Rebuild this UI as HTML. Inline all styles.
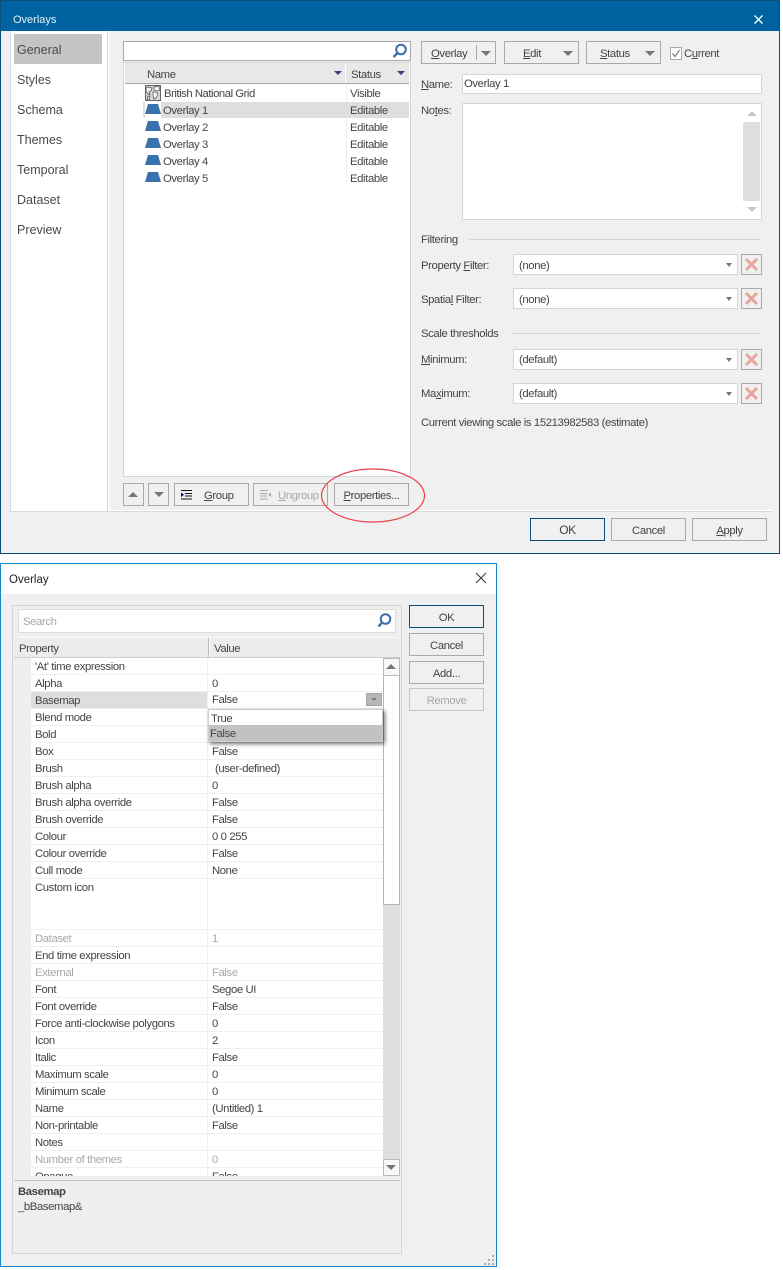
<!DOCTYPE html>
<html><head><meta charset="utf-8"><style>
html,body{margin:0;padding:0;background:#fff}
body{width:783px;height:1270px;position:relative;overflow:hidden;font-family:"Liberation Sans",sans-serif;font-size:11.3px;letter-spacing:-.38px;color:#444}
div,span,svg{position:absolute;box-sizing:border-box}
.t{white-space:nowrap;line-height:16px;height:16px;margin-top:1px}
.nav{font-size:12.5px;letter-spacing:0;color:#4a4a4a;left:17px}
.b{background:#f0f0f0;border:1px solid #a9a9a9;height:23px;width:75px;text-align:center;line-height:24px;white-space:nowrap}
.w{background:#fff;border:1px solid #d5d5d5}
.c{background:#fff;border:1px solid #d5d5d5;left:513px;width:225px;height:21px;line-height:21px;padding-left:5px}
.c i{position:absolute;right:5px;top:8px;width:0;height:0;border:3px solid transparent;border-top:4px solid #777;border-bottom:0}
.x{left:741px;width:21px;height:21px;background:#f0f0f0;border:1px solid #a9a9a9}
.a{position:absolute;width:0;height:0;border-left:5px solid transparent;border-right:5px solid transparent}
.dn{border-top:5px solid #777}.up{border-bottom:5px solid #777}
.r{position:relative;height:17px;border-bottom:1px solid #f0f0f0;line-height:16px;white-space:nowrap}
.r span{top:0}.r span:first-child{left:4px}.r span+span{left:181px}
.g{color:#a8a8a8}
.ln{height:1px;background:#d5d5d5}
</style></head><body>

<!-- top dialog -->
<div style="left:0;top:0;width:780px;height:554px;background:#f0f0f0;border:1px solid #0a4f78"></div>
<div style="left:0;top:0;width:780px;height:31px;background:#0063a1;border:1px solid #0a4f78;border-bottom:0"></div>
<div class="t" style="left:13px;top:11px;color:#e8f0f6;font-size:11px;letter-spacing:0">Overlays</div>
<svg style="left:753px;top:14px" width="11" height="11"><path d="M1.5 1.5L9.5 9.5M9.5 1.5L1.5 9.5" stroke="#fff" stroke-width="1.4"/></svg>

<div style="left:10px;top:31px;width:98px;height:481px;background:#fff;border:1px solid #dadada;border-top:0"></div>
<div style="left:108px;top:31px;width:664px;height:481px;background:#f0f0f0;border:2px solid #fff;border-top:0;border-right:0;outline:0"></div>
<div class="ln" style="left:108px;top:511px;width:664px;background:#dadada"></div>
<div style="left:14px;top:34px;width:88px;height:30px;background:#c4c4c4"></div>
<div class="t nav" style="top:41px">General</div>
<div class="t nav" style="top:71px">Styles</div>
<div class="t nav" style="top:101px">Schema</div>
<div class="t nav" style="top:131px">Themes</div>
<div class="t nav" style="top:161px">Temporal</div>
<div class="t nav" style="top:191px">Dataset</div>
<div class="t nav" style="top:221px">Preview</div>

<div style="left:123px;top:41px;width:288px;height:20px;background:#fff;border:1px solid #a9a9a9"></div>
<svg style="left:391px;top:43px" width="17" height="16" viewBox="0 0 17 16"><circle cx="10" cy="6.5" r="4.8" fill="none" stroke="#3a72ad" stroke-width="2"/><path d="M6.5 10L2.5 14" stroke="#3a72ad" stroke-width="2.4"/></svg>

<div style="left:123px;top:62px;width:288px;height:415px;background:#fff;border:1px solid #d5d5d5"></div>
<div style="left:125px;top:63px;width:284px;height:21px;background:#e8e8e8;border-bottom:1px solid #aaa"></div>
<div style="left:345px;top:63px;width:1px;height:20px;background:#fff"></div>
<div class="t" style="left:147px;top:66px">Name</div>
<div class="t" style="left:351px;top:66px">Status</div>
<div style="left:334px;top:71px;width:0;height:0;border:4px solid transparent;border-top:4px solid #3c3c78;border-bottom:0"></div>
<div style="left:397px;top:71px;width:0;height:0;border:4px solid transparent;border-top:4px solid #3c3c78;border-bottom:0"></div>
<div style="left:346px;top:84px;width:1px;height:102px;background:#eee"></div>
<div style="left:143px;top:102px;width:2px;height:16px;background:#dedede"></div>
<div style="left:161px;top:102px;width:248px;height:16px;background:#dedede"></div>
<svg style="left:145px;top:85px" width="16" height="16" viewBox="0 0 16 16"><rect x=".5" y=".5" width="15" height="15" fill="#d8d8d8" stroke="#666"/><path d="M1 3L4 2L7 3L6 6L4 7L5 10L3 9L1 6ZM9 2L14 1.5L15 5L12 6L9 5ZM8 7L11 7L13 9L11 13L9 14L8 10ZM3 11L5 12L4 15L2 14Z" fill="#f8f8f8" stroke="#555" stroke-width=".8"/></svg>
<svg style="left:145px;top:0" width="16" height="190"><g fill="#3a72ad"><path d="M0 114L3 104H13L16 114Z"/><path d="M0 131L3 121H13L16 131Z"/><path d="M0 148L3 138H13L16 148Z"/><path d="M0 165L3 155H13L16 165Z"/><path d="M0 182L3 172H13L16 182Z"/></g></svg>
<div class="t" style="left:164px;top:85px;letter-spacing:-.46px">British National Grid</div>
<div class="t" style="left:350px;top:85px">Visible</div>
<div class="t" style="left:163px;top:102px">Overlay 1</div><div class="t" style="left:350px;top:102px">Editable</div>
<div class="t" style="left:163px;top:119px">Overlay 2</div><div class="t" style="left:350px;top:119px">Editable</div>
<div class="t" style="left:163px;top:136px">Overlay 3</div><div class="t" style="left:350px;top:136px">Editable</div>
<div class="t" style="left:163px;top:153px">Overlay 4</div><div class="t" style="left:350px;top:153px">Editable</div>
<div class="t" style="left:163px;top:170px">Overlay 5</div><div class="t" style="left:350px;top:170px">Editable</div>

<!-- list bottom buttons -->
<div class="b" style="left:123px;top:483px;width:21px"><i class="a up" style="left:4px;top:8px"></i></div>
<div class="b" style="left:148px;top:483px;width:21px"><i class="a dn" style="left:5px;top:8px"></i></div>
<div class="b" style="left:174px;top:483px"><span class="t" style="left:29px;top:3px"><u>G</u>roup</span>
<svg style="left:6px;top:6px" width="12" height="10"><path d="M0 .5H11M4 3.5H11M4 6H11M0 9H11" stroke="#111"/><path d="M0 2.5L3 4.8L0 7Z" fill="#00008b"/></svg></div>
<div class="b g" style="left:253px;top:483px"><span class="t" style="left:24px;top:3px"><u>U</u>ngroup</span>
<svg style="left:6px;top:6px" width="12" height="10"><path d="M0 .5H8M0 3.5H7M0 6H7M0 9H8" stroke="#aaa"/><path d="M11 2.5L8 4.8L11 7Z" fill="#aaa"/></svg></div>
<div class="b" style="left:334px;top:483px"><u>P</u>roperties...</div>
<svg style="left:318px;top:466px" width="110" height="60"><ellipse cx="55" cy="29.5" rx="51.5" ry="26.5" fill="none" stroke="#e8404a" stroke-width="1.2"/></svg>

<div class="b" style="left:530px;top:518px;border-color:#0a4f78"><span class="t" style="left:0;width:73px;top:2px;font-size:12px">OK</span></div>
<div class="b" style="left:611px;top:518px">Cancel</div>
<div class="b" style="left:692px;top:518px"><u>A</u>pply</div>

<!-- right pane -->
<div class="b" style="left:421px;top:41px;text-align:left;padding-left:9px"><u>O</u>verlay<i style="position:absolute;left:54px;top:3px;width:1px;height:15px;background:#aaa"></i><i class="a dn" style="left:59px;top:9px"></i></div>
<div class="b" style="left:504px;top:41px;text-align:left;padding-left:18px"><u>E</u>dit<i class="a dn" style="left:58px;top:9px"></i></div>
<div class="b" style="left:586px;top:41px;text-align:left;padding-left:13px"><u>S</u>tatus<i class="a dn" style="left:58px;top:9px"></i></div>
<svg style="left:670px;top:47px" width="13" height="13"><rect x=".5" y=".5" width="11" height="12" fill="#fff" stroke="#a9a9a9"/><path d="M2.5 6.5L5 9.5L9.5 3" fill="none" stroke="#666"/></svg>
<div class="t" style="left:684px;top:45px">C<u>u</u>rrent</div>
<div class="t" style="left:421px;top:76px"><u>N</u>ame:</div>
<div class="w" style="left:462px;top:74px;width:300px;height:20px;line-height:19px;padding-left:1px">Overlay 1</div>
<div class="t" style="left:421px;top:102px">No<u>t</u>es:</div>
<div class="w" style="left:462px;top:103px;width:300px;height:117px"></div>
<div class="a" style="left:747px;top:111px;border-bottom:5px solid #c8c8c8"></div>
<div style="left:743px;top:122px;width:17px;height:79px;background:#dedede"></div>
<div class="a" style="left:747px;top:207px;border-top:5px solid #c8c8c8"></div>

<div class="t" style="left:421px;top:231px">Filtering</div>
<div class="ln" style="left:469px;top:239px;width:291px"></div>
<div class="t" style="left:421px;top:257px">Property <u>F</u>ilter:</div>
<div class="c" style="top:254px;line-height:22px">(none)<i></i></div>
<div class="x" style="top:254px"><svg style="left:2px;top:2px" width="15" height="15"><path d="M2 2L13 13M13 2L2 13" stroke="#e9a39b" stroke-width="3"/></svg></div>
<div class="t" style="left:421px;top:291px">Spatia<u>l</u> Filter:</div>
<div class="c" style="top:288px;line-height:22px">(none)<i></i></div>
<div class="x" style="top:288px"><svg style="left:2px;top:2px" width="15" height="15"><path d="M2 2L13 13M13 2L2 13" stroke="#e9a39b" stroke-width="3"/></svg></div>
<div class="t" style="left:421px;top:325px">Scale thresholds</div>
<div class="ln" style="left:511px;top:333px;width:249px"></div>
<div class="t" style="left:421px;top:351px"><u>M</u>inimum:</div>
<div class="c" style="top:349px">(default)<i></i></div>
<div class="x" style="top:349px"><svg style="left:2px;top:2px" width="15" height="15"><path d="M2 2L13 13M13 2L2 13" stroke="#e9a39b" stroke-width="3"/></svg></div>
<div class="t" style="left:421px;top:385px">Ma<u>x</u>imum:</div>
<div class="c" style="top:383px">(default)<i></i></div>
<div class="x" style="top:383px"><svg style="left:2px;top:2px" width="15" height="15"><path d="M2 2L13 13M13 2L2 13" stroke="#e9a39b" stroke-width="3"/></svg></div>
<div class="t" style="left:421px;top:414px">Current viewing scale is 15213982583 (estimate)</div>

<!-- bottom dialog -->
<div style="left:0;top:563px;width:497px;height:704px;background:#f0f0f0;border:1px solid #1b82cf"></div>
<div style="left:1px;top:564px;width:495px;height:30px;background:#fff"></div>
<div class="t" style="left:9px;top:571px;color:#222;font-size:11.5px;letter-spacing:0">Overlay</div>
<svg style="left:475px;top:572px" width="12" height="12"><path d="M1 1L11 11M11 1L1 11" stroke="#333" stroke-width="1"/></svg>
<div style="left:12px;top:605px;width:390px;height:649px;border:1px solid #d5d5d5;background:#efefef"></div>
<div style="left:18px;top:609px;width:378px;height:24px;background:#fff;border:1px solid #dcdcdc"></div>
<div class="t g" style="left:23px;top:613px">Search</div>
<svg style="left:376px;top:612px" width="17" height="17" viewBox="0 0 17 17"><circle cx="9.5" cy="7" r="4.8" fill="none" stroke="#3a72ad" stroke-width="2"/><path d="M6 10.5L2.5 14.5" stroke="#3a72ad" stroke-width="2.4"/></svg>
<div style="left:14px;top:637px;width:386px;height:21px;background:#ececec;border-bottom:1px solid #cfcfcf;border-top:1px solid #f8f8f8"></div>
<div style="left:208px;top:638px;width:2px;height:19px;background:#bbb;border-right:1px solid #fff"></div>
<div class="t" style="left:19px;top:640px">Property</div>
<div class="t" style="left:214px;top:640px">Value</div>

<div style="left:31px;top:658px;width:352px;height:518px;background:#fff;overflow:hidden;border:0">
<div style="left:176px;top:0;width:1px;height:518px;background:#f0f0f0"></div>
<div style="left:0;top:34px;width:176px;height:16px;background:#dedede"></div>
<div style="position:static">
<div class="r"><span class="t">'At' time expression</span><span class="t"></span></div>
<div class="r"><span class="t">Alpha</span><span class="t">0</span></div>
<div class="r"><span class="t">Basemap</span><span class="t" style="top:-1px">False</span></div>
<div class="r"><span class="t">Blend mode</span><span class="t"></span></div>
<div class="r"><span class="t">Bold</span><span class="t"></span></div>
<div class="r"><span class="t">Box</span><span class="t">False</span></div>
<div class="r"><span class="t">Brush</span><span class="t" style="left:184px">(user-defined)</span></div>
<div class="r"><span class="t">Brush alpha</span><span class="t">0</span></div>
<div class="r"><span class="t">Brush alpha override</span><span class="t">False</span></div>
<div class="r"><span class="t">Brush override</span><span class="t">False</span></div>
<div class="r"><span class="t">Colour</span><span class="t">0 0 255</span></div>
<div class="r"><span class="t">Colour override</span><span class="t">False</span></div>
<div class="r"><span class="t">Cull mode</span><span class="t">None</span></div>
<div class="r" style="height:51px"><span class="t">Custom icon</span><span class="t"></span></div>
<div class="r g"><span class="t">Dataset</span><span class="t">1</span></div>
<div class="r"><span class="t">End time expression</span><span class="t"></span></div>
<div class="r g"><span class="t">External</span><span class="t">False</span></div>
<div class="r"><span class="t">Font</span><span class="t">Segoe UI</span></div>
<div class="r"><span class="t">Font override</span><span class="t">False</span></div>
<div class="r"><span class="t">Force anti-clockwise polygons</span><span class="t">0</span></div>
<div class="r"><span class="t">Icon</span><span class="t">2</span></div>
<div class="r"><span class="t">Italic</span><span class="t">False</span></div>
<div class="r"><span class="t">Maximum scale</span><span class="t">0</span></div>
<div class="r"><span class="t">Minimum scale</span><span class="t">0</span></div>
<div class="r"><span class="t">Name</span><span class="t">(Untitled) 1</span></div>
<div class="r"><span class="t">Non-printable</span><span class="t">False</span></div>
<div class="r"><span class="t">Notes</span><span class="t"></span></div>
<div class="r g"><span class="t">Number of themes</span><span class="t">0</span></div>
<div class="r"><span class="t">Opaque</span><span class="t">False</span></div>
</div>
</div>

<!-- scrollbar -->
<div style="left:383px;top:658px;width:17px;height:518px;background:#dedede"></div>
<div style="left:383px;top:658px;width:17px;height:18px;background:#f8f8f8;border:1px solid #bbb"><i class="a up" style="left:2px;top:5px"></i></div>
<div style="left:383px;top:676px;width:17px;height:229px;background:#fff;border:1px solid #b4b4b4;border-top:0"></div>
<div style="left:383px;top:1159px;width:17px;height:17px;background:#f8f8f8;border:1px solid #bbb"><i class="a dn" style="left:2px;top:5px"></i></div>

<!-- combo + dropdown -->
<div style="left:366px;top:693px;width:16px;height:13px;background:#b8b8b8;border:1px solid #a5a5a5"><i style="position:absolute;left:4px;top:4px;width:0;height:0;border:3px solid transparent;border-top:3px solid #777;border-bottom:0"></i></div>
<div style="left:208px;top:709px;width:175px;height:33px;background:#fff;border:1px solid #cfcfcf;box-shadow:2px 2px 4px rgba(0,0,0,.55)">
<div style="left:0;top:15px;width:173px;height:16px;background:#c2c2c2"></div>
<div class="t" style="left:2px;top:0">True</div>
<div class="t" style="left:1px;top:15px">False</div>
</div>

<div style="left:14px;top:1180px;width:386px;height:1px;background:#c4c4c4"></div>
<div class="t" style="left:18px;top:1183px;font-weight:bold;color:#444">Basemap</div>
<div class="t" style="left:18px;top:1198px">_bBasemap&amp;</div>

<div class="b" style="left:409px;top:605px;border-color:#0a4f78">OK</div>
<div class="b" style="left:409px;top:633px">Cancel</div>
<div class="b" style="left:409px;top:661px">Add...</div>
<div class="b g" style="left:409px;top:688px;border-color:#c4c4c4">Remove</div>

<svg style="left:484px;top:1255px" width="11" height="11"><g fill="#a8a8a8"><rect x="8" y="0" width="2" height="2"/><rect x="4" y="4" width="2" height="2"/><rect x="8" y="4" width="2" height="2"/><rect x="0" y="8" width="2" height="2"/><rect x="4" y="8" width="2" height="2"/><rect x="8" y="8" width="2" height="2"/></g></svg>

</body></html>
